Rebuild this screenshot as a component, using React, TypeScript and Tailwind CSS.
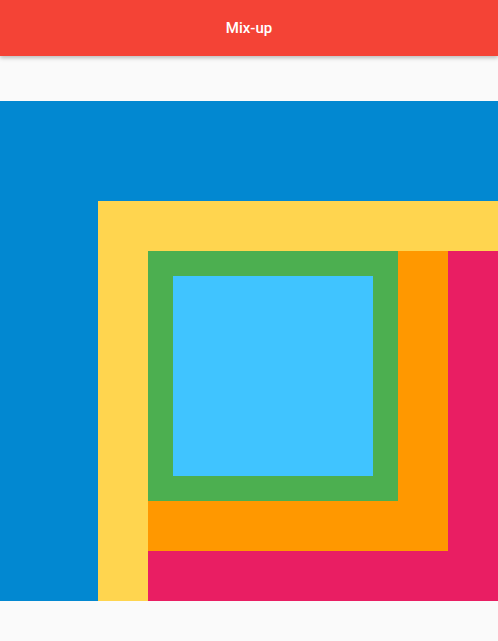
export default function App() {
  return (
    <div className="min-h-[641px] bg-[#fafafa]" style={{ fontFamily: 'Roboto, "Noto Sans", sans-serif' }}>
      {/* App bar */}
      <header className="relative z-10 flex h-14 items-center justify-center bg-[#f44336] shadow-[0_2px_4px_rgba(0,0,0,0.25)]">
        <h1 className="text-[15px] font-medium text-white">Mix-up</h1>
      </header>

      {/* Nested boxes */}
      <div className="pt-[45px]">
        <div className="flex h-[500px] w-full bg-[#0288d1] pl-[98px] pt-[100px]">
          <div className="flex h-[400px] flex-1 bg-[#ffd54f] pl-[50px] pt-[50px]">
            <div className="h-[350px] flex-1 bg-[#e91e63]">
              <div className="h-[300px] w-[300px] bg-[#ff9800]">
                <div className="h-[250px] w-[250px] bg-[#4caf50] p-[25px]">
                  <div className="h-[200px] w-[200px] bg-[#40c4ff]" />
                </div>
              </div>
            </div>
          </div>
        </div>
      </div>
    </div>
  )
}
